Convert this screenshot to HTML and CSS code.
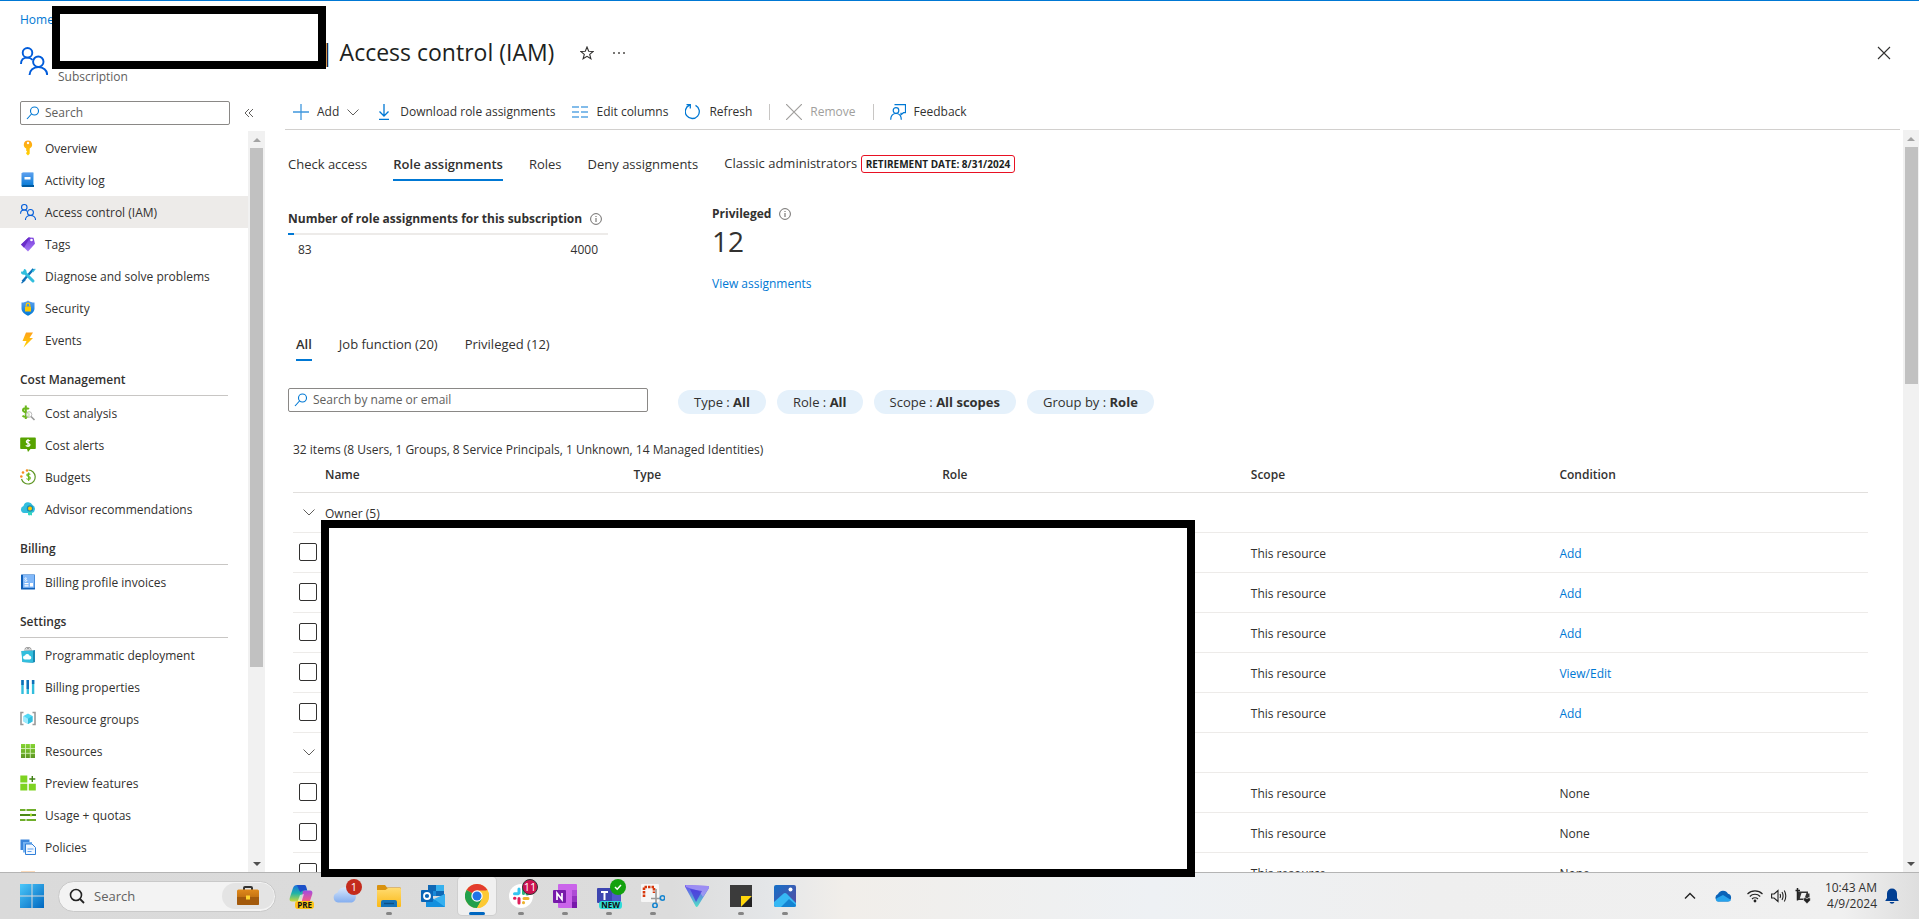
FILE: index.html
```
<!DOCTYPE html>
<html lang="en">
<head>
  <meta charset="UTF-8">
  <meta name="viewport" content="width=device-width, initial-scale=1.0">
  <title>Access control (IAM)</title>
  <link rel="stylesheet" href="styles.css">
</head>
<body>
  <!-- Shared icons -->
  <svg class="sprite" aria-hidden="true">
    <defs>
      <linearGradient id="gBlue" x1="0" y1="0" x2="0" y2="1"><stop offset="0" stop-color="#5ea0ef"/><stop offset="1" stop-color="#0078d4"/></linearGradient>
      <linearGradient id="gKey" x1="0" y1="0" x2="0" y2="1"><stop offset="0" stop-color="#fea11b"/><stop offset="1" stop-color="#ffd400"/></linearGradient>
      <linearGradient id="gPurple" x1="0" y1="0" x2="0" y2="1"><stop offset="0" stop-color="#773adc"/><stop offset="1" stop-color="#a67af4"/></linearGradient>
      <linearGradient id="gGreen" x1="0" y1="0" x2="0" y2="1"><stop offset="0" stop-color="#86d633"/><stop offset="1" stop-color="#5e9624"/></linearGradient>
      <linearGradient id="gWin" x1="0" y1="0" x2="1" y2="1"><stop offset="0" stop-color="#4cc8fa"/><stop offset="1" stop-color="#0067c0"/></linearGradient>
      <linearGradient id="gCase" x1="0" y1="0" x2="0" y2="1"><stop offset="0" stop-color="#e08a1c"/><stop offset="1" stop-color="#a85a08"/></linearGradient>
      <linearGradient id="gCopA" x1="0" y1="0" x2="0" y2="1"><stop offset="0" stop-color="#1a6fe0"/><stop offset=".5" stop-color="#1fb3a8"/><stop offset="1" stop-color="#c8d83c"/></linearGradient>
      <linearGradient id="gCopB" x1="0" y1="0" x2="0" y2="1"><stop offset="0" stop-color="#a34be0"/><stop offset=".6" stop-color="#ee5c8c"/><stop offset="1" stop-color="#f7963c"/></linearGradient>
      <linearGradient id="gCloud" x1="0" y1="0" x2="0" y2="1"><stop offset="0" stop-color="#d9e8fb"/><stop offset="1" stop-color="#84aeef"/></linearGradient>
      <linearGradient id="gFolder" x1="0" y1="0" x2="0" y2="1"><stop offset="0" stop-color="#ffdb70"/><stop offset="1" stop-color="#fbb917"/></linearGradient>
      <linearGradient id="gVpn" x1="0" y1="0" x2="0" y2="1"><stop offset="0" stop-color="#6a4bf0"/><stop offset="1" stop-color="#4fe0c8"/></linearGradient>
      <linearGradient id="gPhoto" x1="0" y1="0" x2="1" y2="1"><stop offset="0" stop-color="#1370c8"/><stop offset="1" stop-color="#5b4aa0"/></linearGradient>
    </defs>
    <symbol id="people" viewBox="0 0 28 28">
      <g fill="none" stroke="#015cda" stroke-width="1.900">
        <circle cx="7.500" cy="5.800" r="4.800"/>
        <path d="M1 17c0-4 2.500-6.400 6.500-6.400 2.200 0 3.800.8 5 2.200"/>
        <circle cx="18.300" cy="14.700" r="5.200"/>
        <path d="M9.500 28c0-4.500 4-8 8.900-8s8.800 3.500 8.800 8"/>
      </g>
    </symbol>
    <symbol id="magnifier" viewBox="0 0 14 14">
      <g fill="none" stroke="#0078d4" stroke-width="1.100"><circle cx="8.500" cy="5" r="4"/><path d="M5.500 8L1 13"/></g>
    </symbol>
    <symbol id="chevron" viewBox="0 0 12 12">
      <path d="M.5 3.500L6 9l5.500-5.500" fill="none" stroke="#605e5c"/>
    </symbol>
    <symbol id="info" viewBox="0 0 12 12">
      <circle cx="6" cy="6" r="5.400" fill="none" stroke="#605e5c" stroke-width=".9"/>
      <path d="M6 5v4M6 3v1" stroke="#605e5c"/>
    </symbol>
  </svg>

  <div class="portal">
    <header class="blade-header">
      <nav class="breadcrumb"><a href="#">Home</a></nav>
      <div class="title-row">
        <svg class="blade-icon"><use href="#people"/></svg>
        <div class="title-text">
          <h1><span class="divider">|</span> Access control (IAM)</h1>
          <p>Subscription</p>
        </div>
        <button class="icon-button" aria-label="Favorite">
          <svg width="14" height="14" viewBox="0 0 14 14"><path d="M7 1l1.700 4.200 4.500.3-3.500 2.900 1.200 4.400L7 10.400l-3.900 2.400 1.200-4.400L.8 5.500l4.500-.3z" fill="none" stroke="#323130" stroke-width="1.100"/></svg>
        </button>
        <button class="icon-button" aria-label="More">
          <svg width="14" height="14" viewBox="0 0 14 14" fill="#797775"><rect x="1" y="6" width="2" height="2"/><rect x="6" y="6" width="2" height="2"/><rect x="11" y="6" width="2" height="2"/></svg>
        </button>
        <button class="icon-button close" aria-label="Close">
          <svg width="14" height="14" viewBox="0 0 14 14"><path d="M1 1l12 12M13 1L1 13" stroke="#323130" stroke-width="1.100"/></svg>
        </button>
      </div>
    </header>

    <div class="blade-body">
      <aside class="sidebar">
        <div class="sidebar-search">
          <label class="search-box">
            <svg><use href="#magnifier"/></svg>
            <input type="text" placeholder="Search" aria-label="Search menu">
          </label>
          <button class="collapse" aria-label="Collapse menu">
            <svg width="10" height="10" viewBox="0 0 10 10"><path d="M5 1L1 5l4 4M9 1L5 5l4 4" fill="none" stroke="#605e5c"/></svg>
          </button>
        </div>
        <div class="scroll-area">
          <nav class="menu">
            <a href="#"><svg viewBox="0 0 16 16"><path d="M8 .5a4.200 4.200 0 0 1 1.700 8v5.200L8 15.500l-1.800-1.800v-1l1-1-1-1V8.500A4.200 4.200 0 0 1 8 .5z" fill="url(#gKey)"/><circle cx="8" cy="3" r="1.200" fill="#fff"/></svg>Overview</a>
            <a href="#"><svg viewBox="0 0 16 16"><path d="M3 .5h11v14H3z" fill="#9cd0f5"/><path d="M1.500 1.500l1-1H13V14l-1 1H2.500l-1-1z" fill="url(#gBlue)"/><rect x="4.500" y="5" width="6" height="2.500" fill="#fff"/><path d="M1.500 14l1.500-1h11v2H2.500z" fill="#005ba1"/></svg>Activity log</a>
            <a href="#" class="active"><svg><use href="#people"/></svg>Access control (IAM)</a>
            <a href="#"><svg viewBox="0 0 16 16"><path d="M1 8.500L8.500 1.500l5 .2 1.500 6L8 15.500z" fill="url(#gPurple)"/><path d="M1 8.500L8.500 1.500l1.500.1L4 11.800z" fill="#6a2ec8"/><circle cx="11.500" cy="4" r="1.300" fill="#fff"/></svg>Tags</a>
            <a href="#"><svg viewBox="0 0 16 16"><path d="M13.500 1L2.500 13.500" stroke="#0f6fb8" stroke-width="2.400"/><path d="M4 4l9 9" stroke="#32bedd" stroke-width="3" stroke-linecap="round"/><path d="M1 3.500l2.500.5.500-3c2 0 3 2 2.500 3.500S4 7 2.500 6.500 1 4.500 1 3.500z" fill="#32bedd"/><path d="M15 .5l.7.7L13 4.500 11.700 3z" fill="#32bedd"/><path d="M1 15l3.500-4 1.200 1.200L2 15.500z" fill="#0f6fb8"/></svg>Diagnose and solve problems</a>
            <a href="#"><svg viewBox="0 0 16 16"><path d="M8 .5c2 1.500 4 2 6.500 2v6c0 3.500-3.500 6-6.500 7.200C5 14.500 1.500 12 1.500 8.500v-6C4 2.500 6 2 8 .5z" fill="url(#gBlue)"/><rect x="5" y="6.500" width="6" height="5" rx=".6" fill="#ffca00"/><path d="M6.200 6.500V5a1.800 1.800 0 0 1 3.600 0v1.500" fill="none" stroke="#ffca00" stroke-width="1.200"/></svg>Security</a>
            <a href="#"><svg viewBox="0 0 16 16"><path d="M6 .5h7L9.500 6H13L3.500 15.500 6.500 9H2.500z" fill="url(#gKey)"/></svg>Events</a>

            <h2>Cost Management</h2>
            <a href="#"><svg viewBox="0 0 16 16"><path d="M8.800 4.200C8 3 3 2.600 3 5.200s6 2 6 4.600-5 2.400-6.500.8M5.800.5v13.500" fill="none" stroke="#6bb71c" stroke-width="2"/><circle cx="9" cy="9.500" r="2.800" fill="#fff" fill-opacity=".7" stroke="#bbb"/><path d="M11 11.500l3.500 3.500" stroke="#999" stroke-width="1.600"/></svg>Cost analysis</a>
            <a href="#"><svg viewBox="0 0 16 16"><path d="M1 .5h14q.8 0 .8.800v10q0 .8-.8.8H10.500L8 15l-1-2.900H1q-.8 0-.8-.8v-10Q.2.500 1 .5z" fill="#57a300"/><path d="M10 4C9.500 3.200 6.300 3 6.300 4.700S10 6 10 7.800s-3.500 1.500-4.200.5M8 2v8" fill="none" stroke="#fff" stroke-width="1.200"/></svg>Cost alerts</a>
            <a href="#"><svg viewBox="0 0 16 16"><path d="M8.500 1a7 7 0 1 1-7 9" fill="none" stroke="#5e9624" stroke-width="1.200"/><path d="M10.300 5.500C9.500 4.500 6.800 4.500 6.800 6s3.500 1.200 3.500 3-3 1.500-3.800.5M8.600 3.500v8.500" fill="none" stroke="#6bb71c" stroke-width="1.200"/><circle cx="7" cy="1.500" r="1.300" fill="#f78d1e"/><circle cx="3" cy="3.500" r="1.300" fill="#f78d1e"/><circle cx="1.300" cy="7.500" r="1.300" fill="#f78d1e"/></svg>Budgets</a>
            <a href="#"><svg viewBox="0 0 16 16"><path d="M4 12a3.600 3.600 0 0 1-.5-7A4.800 4.800 0 0 1 12.500 4 4.300 4.300 0 0 1 12 12z" fill="#32bedd"/><path d="M8 10h4v4.800l-1.200-1-1 1-.8-1-1 .7z" fill="#32d4c0"/><circle cx="10" cy="7.500" r="3.200" fill="#198ab3"/><circle cx="10" cy="7.500" r="2" fill="#ffca00"/></svg>Advisor recommendations</a>

            <h2>Billing</h2>
            <a href="#"><svg viewBox="0 0 16 16"><rect x="1" y=".5" width="14" height="15" rx=".6" fill="#0f5fb8"/><rect x="3" y=".8" width="11.500" height="13" fill="#83b9f9"/><path d="M4.500 9h4v1.200h-4zM4.500 11.200h4v1.200h-4zM10 9h3v3.500h-3z" fill="#fff"/><path d="M6.800 4.500c-1-1-2-.5-2 .3s2 .8 2 1.700-1.300 1-2.200.2" fill="none" stroke="#fff"/></svg>Billing profile invoices</a>

            <h2>Settings</h2>
            <a href="#"><svg viewBox="0 0 16 16"><path d="M5 4V2.500a2 2 0 0 1 4 0V4M7 4V2.500a2 2 0 0 1 4 0V4" fill="none" stroke="#999"/><path d="M1.500 4l11-.5L15 3v12l-2 .8L2.500 15z" fill="#198ab3"/><path d="M1.500 4H13v11.500L2.300 15z" fill="#32bedd"/><path d="M5 12.500a2 2 0 0 1 0-4 2.500 2.500 0 0 1 4.600.3 1.900 1.900 0 0 1 .4 3.700z" fill="#fff"/></svg>Programmatic deployment</a>
            <a href="#"><svg viewBox="0 0 16 16"><path d="M2.500 1v14M7.800 1v14M13.100 1v14" stroke="#32bedd" stroke-width="2.400"/><path d="M2.500 1v5M7.800 1v9M13.100 1v4" stroke="#0f6fb8" stroke-width="2.400"/></svg>Billing properties</a>
            <a href="#"><svg viewBox="0 0 16 16"><path d="M3.500 1.500H1v12h2.500M12.500 1.500H15v12h-2.500" fill="none" stroke="#999" stroke-width="1.600"/><path d="M8 2.500l4.500 2.500v5.500L8 13 3.500 10.500V5z" fill="#50d8f5"/><path d="M8 7.700V13l-4.500-2.500V5z" fill="#9cebff"/><path d="M12.500 5v5.500L8 13V7.700z" fill="#32bedd"/></svg>Resource groups</a>
            <a href="#"><svg viewBox="0 0 16 16"><rect x="1" y="1" width="14" height="14" fill="url(#gGreen)"/><path d="M1 5.500h14M1 10.300h14M5.500 1v14M10.300 1v14" stroke="#d5efb8" stroke-width=".9"/></svg>Resources</a>
            <a href="#"><svg viewBox="0 0 16 16"><path d="M.3.5h7v7h-7zM.3 8.800h7v6.700h-7zM8.800 8.800h7v6.700h-7z" fill="#7ed321"/><path d="M12.300 1v6M9.300 4h6" stroke="#3f8012" stroke-width="1.400"/></svg>Preview features</a>
            <a href="#"><svg viewBox="0 0 16 16"><path d="M0 3h5.500M6.500 3H16M0 13h5.500M6.500 13H16" stroke="#6fae2b" stroke-width="2"/><path d="M0 8h16" stroke="#4c8a16" stroke-width="2"/><path d="M11 6.500v3" stroke="#b4ec36" stroke-width="1.600"/></svg>Usage + quotas</a>
            <a href="#"><svg viewBox="0 0 16 16"><path d="M.5.500h9V11h-9z" fill="#3a85db"/><path d="M3 3h9v10.500H3z" fill="#76b3f2"/><path d="M5.500 5h6.500l3.500 3.500v7h-10z" fill="#f2f8ff" stroke="#2f7ed8"/><path d="M7.500 10h6M7.500 12.500h4" stroke="#5ea0ef"/></svg>Policies</a>
            <a href="#" aria-label="Resource locks"><svg viewBox="0 0 16 16"><rect x="1" y="0" width="14" height="15" fill="#fbd9b8"/></svg></a>
          </nav>
          <div class="scrollbar menu-scroll" aria-hidden="true">
            <span class="arrow up"></span>
            <span class="thumb"></span>
            <span class="arrow down"></span>
          </div>
        </div>
      </aside>

      <main>
        <div class="toolbar">
          <button><svg viewBox="0 0 16 16"><path d="M8 0v16M0 8h16" stroke="#3f97dd" stroke-width="1.300"/></svg>Add<svg class="small"><use href="#chevron"/></svg></button>
          <button><svg viewBox="0 0 16 16"><path d="M8 0v12M3.500 7.500L8 12l4.500-4.500M3 15.300h10" fill="none" stroke="#0078d4" stroke-width="1.300"/></svg>Download role assignments</button>
          <button><svg viewBox="0 0 16 16"><path d="M0 3h7M9 3h7M0 8h7M9 8h7M0 13h7M9 13h7" stroke="#5aa7e4" stroke-width="1.600"/></svg>Edit columns</button>
          <button><svg viewBox="0 0 16 16"><path d="M10.500 1.300a7 7 0 1 1-6-.2M1.500.7h3.800v3.800" fill="none" stroke="#0078d4" stroke-width="1.300"/></svg>Refresh</button>
          <button class="split" disabled><svg viewBox="0 0 16 16"><path d="M0 0l16 16M16 0L0 16" stroke="#a19f9d" stroke-width="1.200"/></svg>Remove</button>
          <button class="split"><svg viewBox="0 0 16 16"><g fill="none" stroke="#0078d4" stroke-width="1.200"><path d="M4.500.7h11v8h-2l-2.500 2v-2"/><circle cx="6" cy="6.500" r="2.800"/><path d="M.7 15.800c0-4 2-6.300 5.300-6.300s5.300 2.300 5.300 6.300"/></g></svg>Feedback</button>
        </div>

        <div class="scroll-area">
          <div class="content">
            <div class="tabs">
              <button>Check access</button>
              <button class="active">Role assignments</button>
              <button>Roles</button>
              <button>Deny assignments</button>
              <button>Classic administrators <span class="badge">RETIREMENT DATE: 8/31/2024</span></button>
            </div>

            <div class="stats">
              <section class="quota">
                <h3>Number of role assignments for this subscription <svg><use href="#info"/></svg></h3>
                <div class="bar"><span style="width: 2%"></span></div>
                <div class="range"><span>83</span><span>4000</span></div>
              </section>
              <section class="privileged">
                <h3>Privileged <svg><use href="#info"/></svg></h3>
                <p>12</p>
                <a href="#">View assignments</a>
              </section>
            </div>

            <div class="tabs sub-tabs">
              <button class="active">All</button>
              <button>Job function (20)</button>
              <button>Privileged (12)</button>
            </div>

            <div class="filters">
              <label class="search-box">
                <svg><use href="#magnifier"/></svg>
                <input type="text" placeholder="Search by name or email" aria-label="Search by name or email">
              </label>
              <div class="pills">
                <button>Type : <b>All</b></button>
                <button>Role : <b>All</b></button>
                <button>Scope : <b>All scopes</b></button>
                <button>Group by : <b>Role</b></button>
              </div>
            </div>

            <p class="summary">32 items (8 Users, 1 Groups, 8 Service Principals, 1 Unknown, 14 Managed Identities)</p>

            <table>
              <colgroup><col class="select-col"><col><col><col><col><col></colgroup>
              <thead>
                <tr><th></th><th>Name</th><th>Type</th><th>Role</th><th>Scope</th><th>Condition</th></tr>
              </thead>
              <tbody>
                <tr class="group"><td><button aria-label="Collapse group"><svg><use href="#chevron"/></svg></button></td><td colspan="5">Owner (5)</td></tr>
                <tr><td><input type="checkbox" aria-label="Select row"></td><td></td><td></td><td></td><td>This resource</td><td><a href="#">Add</a></td></tr>
                <tr><td><input type="checkbox" aria-label="Select row"></td><td></td><td></td><td></td><td>This resource</td><td><a href="#">Add</a></td></tr>
                <tr><td><input type="checkbox" aria-label="Select row"></td><td></td><td></td><td></td><td>This resource</td><td><a href="#">Add</a></td></tr>
                <tr><td><input type="checkbox" aria-label="Select row"></td><td></td><td></td><td></td><td>This resource</td><td><a href="#">View/Edit</a></td></tr>
                <tr><td><input type="checkbox" aria-label="Select row"></td><td></td><td></td><td></td><td>This resource</td><td><a href="#">Add</a></td></tr>
              </tbody>
              <tbody>
                <tr class="group"><td><button aria-label="Collapse group"><svg><use href="#chevron"/></svg></button></td><td colspan="5"></td></tr>
                <tr><td><input type="checkbox" aria-label="Select row"></td><td></td><td></td><td></td><td>This resource</td><td>None</td></tr>
                <tr><td><input type="checkbox" aria-label="Select row"></td><td></td><td></td><td></td><td>This resource</td><td>None</td></tr>
                <tr><td><input type="checkbox" aria-label="Select row"></td><td></td><td></td><td></td><td>This resource</td><td>None</td></tr>
              </tbody>
            </table>
          </div>
          <div class="scrollbar page-scroll" aria-hidden="true">
            <span class="arrow up"></span>
            <span class="thumb"></span>
            <span class="arrow down"></span>
          </div>
        </div>
      </main>
    </div>
  </div>

  <footer class="taskbar">
    <button class="start" aria-label="Start">
      <svg width="24" height="24" viewBox="0 0 24 24"><path d="M0 0h11.500v11.500H0zM12.500 0H24v11.500H12.500zM0 12.500h11.500V24H0zM12.500 12.500H24V24H12.500z" fill="url(#gWin)"/></svg>
    </button>
    <label class="task-search">
      <svg width="16" height="16" viewBox="0 0 16 16"><circle cx="7" cy="7" r="5.500" fill="none" stroke="#222" stroke-width="1.600"/><path d="M11 11l4 4" stroke="#222" stroke-width="1.800"/></svg>
      <input type="text" placeholder="Search" aria-label="Search Windows">
      <span class="briefcase"><svg width="24" height="20" viewBox="0 0 24 20"><path d="M8 4V2q0-1 1-1h6q1 0 1 1v2" fill="none" stroke="#333" stroke-width="2"/><rect x="1" y="3.500" width="22" height="15.500" rx="1.500" fill="url(#gCase)"/><path d="M1 11h22v6.500q0 1.500-1.500 1.500h-19Q1 19 1 17.500z" fill="#a35a0c"/><rect x="10" y="9.500" width="4" height="4" fill="#ffd52e"/></svg></span>
    </label>
    <div class="apps">
      <button aria-label="Copilot">
        <svg viewBox="0 0 24 24"><path d="M8 1h7q2 0 1.300 2.200L12.500 15.500Q12 17.500 10 17.500H3Q0 17.500.7 14L4 4q1-3 4-3z" fill="url(#gCopA)"/><path d="M14 6.500h7q3 0 2.300 3.500L20 20q-1 3-4 3H9q2 0 2.700-2.200z" fill="url(#gCopB)"/><path d="M8 1h7q2 0 2.300 2l1 3.500h-4q-2 0-2.500 2L10 6z" fill="#1c50c8"/><path d="M11 11l-2.500 7h4l2.500-8z" fill="#fff" opacity=".6"/></svg>
        <span class="tag pre">PRE</span>
      </button>
      <button aria-label="Weather">
        <svg viewBox="0 0 24 24"><path d="M5 18.500a5 5 0 0 1-.6-9.800A7.500 7.500 0 0 1 18 7a6 6 0 0 1 1 11.500z" fill="url(#gCloud)"/></svg>
        <span class="count">1</span>
      </button>
      <button class="open" aria-label="File Explorer">
        <svg viewBox="0 0 24 24"><path d="M0 2q0-1 1-1h7l2 2.500h13q1 0 1 1V8H0z" fill="#d9920f"/><path d="M0 6h8.500L11 4h12q1 0 1 1v17q0 1-1 1H1q-1 0-1-1z" fill="url(#gFolder)"/><path d="M4 23v-5q0-2 2-2h12q2 0 2 2v5z" fill="#1673b8"/><path d="M7 19.500h10" stroke="#0c4f86" stroke-width="1.400"/></svg>
      </button>
      <button aria-label="Outlook">
        <svg viewBox="0 0 24 24"><path d="M7 1h16v11H7z" fill="#0f68b5"/><path d="M15 1h8v6h-8z" fill="#35b1ee"/><path d="M7 7h8v5H7z" fill="#1989d8"/><path d="M5 10l9.500 6L24 10v13H5z" fill="#1490df"/><path d="M24 10v13L13 15z" fill="#36b0f0"/><rect y="6" width="12" height="12" rx="1" fill="#0a66b7"/><circle cx="6" cy="12" r="3" fill="none" stroke="#fff" stroke-width="1.800"/></svg>
      </button>
      <button class="open current" aria-label="Chrome">
        <svg viewBox="0 0 24 24"><circle cx="12" cy="12" r="12" fill="#fcc934"/><path d="M12 12L1.600 6A12 12 0 0 1 22.400 6z" fill="#e33b2e"/><path d="M12 12L1.600 6A12 12 0 0 0 12 24l5.200-9z" fill="#22a04c"/><path d="M12 6.500h10.700A12 12 0 0 1 12 24l5-9z" fill="#fcc934"/><circle cx="12" cy="12" r="5.700" fill="#fff"/><circle cx="12" cy="12" r="4.500" fill="#2173e8"/></svg>
      </button>
      <button class="open" aria-label="Slack">
        <svg viewBox="0 0 24 24"><circle cx="12" cy="12" r="12" fill="#fff"/><g stroke-width="3" stroke-linecap="round"><path d="M10 5v4M5.500 9.800H9" stroke="#36c5f0"/><path d="M14.500 5v4.500M18.500 10h-.5" stroke="#2eb67d"/><path d="M15 14.500h4M14.500 18.500v.3" stroke="#ecb22e"/><path d="M10 14.500v4.500M5.500 14.300h.5" stroke="#e01e5a"/></g></svg>
        <span class="count slack">11</span>
      </button>
      <button class="open" aria-label="OneNote">
        <svg viewBox="0 0 24 24"><rect x="5" width="19" height="24" rx="1" fill="#ca64ea"/><path d="M19 6h5v6h-5z" fill="#ae4bd5"/><path d="M19 12h5v6h-5z" fill="#9332bf"/><path d="M19 18h5v6h-5z" fill="#7719aa"/><rect y="6" width="13" height="13" rx="1" fill="#7719aa"/><path d="M4 16V9.200l5 6.400V9" fill="none" stroke="#fff" stroke-width="1.700"/></svg>
      </button>
      <button class="open" aria-label="Teams">
        <svg viewBox="0 0 24 24"><circle cx="17" cy="4" r="3.500" fill="#5b63c8"/><path d="M11 8h13v9q-1 5-6 5h-7z" fill="#5059c9"/><rect y="4" width="15" height="15" rx="1" fill="#3d45b0"/><path d="M4 8h7M7.500 8v8" stroke="#fff" stroke-width="2"/></svg>
        <span class="count ok"><svg viewBox="0 0 10 10"><path d="M2 5l2.200 2.200L8 3" fill="none" stroke="#fff" stroke-width="1.500"/></svg></span>
        <span class="tag new">NEW</span>
      </button>
      <button class="open" aria-label="Snipping Tool">
        <svg viewBox="0 0 24 24"><rect width="18" height="18" rx="1" fill="#f6f6f6"/><path d="M3 13V3h10v6" fill="none" stroke="#d8380c" stroke-width="2.600" stroke-dasharray="2.500 1"/><path d="M15 5v14M10 14.500h9" stroke="#999" stroke-width="1.600"/><circle cx="21.500" cy="14" r="2.200" fill="none" stroke="#1786d0" stroke-width="1.600"/><circle cx="14" cy="21.500" r="2.200" fill="none" stroke="#1786d0" stroke-width="1.600"/></svg>
      </button>
      <button aria-label="VPN">
        <svg viewBox="0 0 24 24"><path d="M1 1l22 1q2 0 1 2L13 22q-1.500 2-2.500 0L.2 3Q-.5 1 1 1z" fill="url(#gVpn)"/><path d="M1 1l22 1q2 0 1 2l-6 9-4-6-13-4z" fill="#a99af5" opacity=".8"/><path d="M5 5l12 2-6 11z" fill="#4432d8" opacity=".7"/></svg>
      </button>
      <button class="open" aria-label="Sticky Notes">
        <svg viewBox="0 0 24 24"><path d="M1 1h22v11l-11 11H1z" fill="#3b3b3b"/><path d="M12 23V12h11z" fill="#ffd60a"/><path d="M12 23l11-11v11z" fill="#222"/></svg>
      </button>
      <button class="open" aria-label="Photos">
        <svg viewBox="0 0 24 24"><rect x="1" y="1" width="22" height="22" rx="2" fill="url(#gPhoto)"/><path d="M1 18l9-8q2-2 4 0l9 9v2q0 2-2 2H3q-2 0-2-2z" fill="#36b8f4"/><path d="M8 23l8-8 7 6q-.3 2-2 2z" fill="#1583d2"/><circle cx="17.500" cy="5.500" r="2" fill="#fff"/></svg>
      </button>
    </div>

    <div class="tray">
      <svg width="12" height="12" viewBox="0 0 12 12"><path d="M1 8.500l5-5 5 5" fill="none" stroke="#222" stroke-width="1.400"/></svg>
      <svg class="onedrive" width="18" height="12" viewBox="0 0 18 12"><path d="M4 11.500A4 4 0 0 1 4 4a5.500 5.500 0 0 1 10-.3 4 4 0 0 1 0 7.800z" fill="#0a63b8"/><path d="M3 11.500q-2-2 0-3.500l6-3 8 5q-.7 1.500-3 1.500z" fill="#27a3ec"/></svg>
      <svg width="16" height="14" viewBox="0 0 16 14"><g fill="none" stroke="#222" stroke-width="1.100"><path d="M.5 5a10.500 10.500 0 0 1 15 0M2.800 7.500a7.300 7.300 0 0 1 10.400 0M5 10a4.200 4.200 0 0 1 6 0"/></g><circle cx="8" cy="12" r="1.400" fill="#222"/></svg>
      <svg width="16" height="14" viewBox="0 0 16 14"><path d="M.6 5v4h2.500L7 12.500v-11L3.100 5zM9 5q1 2 0 4M11 3q2.200 4 0 8M13.300 1.500q3 5.500 0 11" fill="none" stroke="#222" stroke-width="1.100"/></svg>
      <svg width="16" height="16" viewBox="0 0 16 16"><path d="M3 3.500h10v2h1.500v4H13V12H3z" fill="#333"/><path d="M6.500 5h5L9.500 10.500H4.800z" fill="#f0f0f0"/><path d="M2.500 0v4M.5 2.500h4.500M2.500 4v8.500" fill="none" stroke="#222" stroke-width="1.500"/><path d="M12 15.800L8.600 12.300q-.6-2.200 1.200-2.600Q11.500 9.500 12 11q.5-1.500 2.200-1.300 1.800.4 1.200 2.600z" fill="#222" stroke="#f0f0f0" stroke-width=".6"/></svg>
      <time datetime="2024-04-09T10:43">10:43 AM<br>4/9/2024</time>
      <svg width="14" height="16" viewBox="0 0 14 16"><path d="M7 .5a5 5 0 0 1 5 5V10l1.800 3H.2L2 10V5.500a5 5 0 0 1 5-5zM4.500 14h5q-.5 1.800-2.500 1.800T4.500 14z" fill="#003e92"/></svg>
    </div>
  </footer>

  <!-- Hidden customer data -->
  <div class="redaction subscription-name"></div>
  <div class="redaction assignees"></div>
</body>
</html>
```
FILE: styles.css
```
* {
  box-sizing: border-box;
}

body {
  margin: 0;
  height: 100vh;
  display: flex;
  flex-direction: column;
  overflow: hidden;
  position: relative;
  font-family: "Segoe UI", "Open Sans", "Noto Sans", sans-serif;
  font-size: 12px;
  line-height: 16px;
  color: #323130;
  background: #fff;
}

h1, h2, h3, p {
  margin: 0;
}

a {
  color: #0078d4;
  text-decoration: none;
}

button, input {
  font: inherit;
  color: inherit;
}

button {
  border: none;
  background: none;
  padding: 0;
  cursor: pointer;
}

svg {
  flex: none;
}

.sprite {
  position: absolute;
  width: 0;
  height: 0;
}

/* Blade header */
.portal {
  flex: 1;
  min-height: 0;
  display: flex;
  flex-direction: column;
  border-top: 1px solid #0078d4;
}

.blade-header {
  height: 93px;
  padding: 11px 28px 0 20px;
}

.title-row {
  display: flex;
  align-items: flex-start;
  gap: 12px;
  margin-top: 6px;
}

.blade-icon {
  width: 28px;
  height: 28px;
  margin-top: 13px;
}

.title-text {
  margin-left: -2px;
}

.title-text h1 {
  margin-left: 263px;
  font-size: 23px;
  line-height: 36px;
  font-weight: 400;
  color: #201f1e;
}

.title-text p {
  margin-top: -1px;
  font-size: 12px;
  color: #605e5c;
}

.icon-button {
  height: 38px;
  width: 20px;
  display: flex;
  align-items: center;
  justify-content: center;
}

.title-text + .icon-button {
  margin-left: 11px;
}

.close {
  margin-left: auto;
  margin-right: -3px;
}

.blade-body {
  flex: 1;
  min-height: 0;
  display: flex;
}

/* Left menu */
.sidebar {
  width: 265px;
  display: flex;
  flex-direction: column;
}

.sidebar-search {
  height: 37px;
  display: flex;
  align-items: center;
  gap: 14px;
  padding-left: 20px;
}

.sidebar-search .search-box {
  width: 210px;
}

.search-box {
  display: flex;
  align-items: center;
  gap: 5px;
  height: 24px;
  padding: 0 5px;
  border: 1px solid #8a8886;
  border-radius: 2px;
}

.search-box svg {
  width: 14px;
  height: 14px;
}

.search-box input {
  flex: 1;
  min-width: 0;
  padding: 0;
  border: none;
  outline: none;
  background: none;
}

.search-box input::placeholder {
  color: #605e5c;
  opacity: 1;
}

.collapse {
  display: flex;
}

.scroll-area {
  flex: 1;
  min-height: 0;
  display: flex;
  overflow: hidden;
}

.menu {
  flex: 1;
  padding-top: 1px;
}

.menu a {
  display: flex;
  align-items: center;
  gap: 9px;
  height: 32px;
  padding: 2px 0 0 20px;
  color: #323130;
}

.menu a svg {
  width: 16px;
  height: 16px;
  margin-bottom: 2px;
}

.menu a.active {
  background: #edebe9;
}

.menu h2 {
  height: 40px;
  margin: 0 20px 1px;
  padding-top: 16px;
  border-bottom: 1px solid #c8c6c4;
  font-size: 12px;
  font-weight: 600;
}

/* Scrollbars */
.scrollbar {
  width: 17px;
  display: flex;
  flex-direction: column;
  align-items: center;
  background: #f1f1f1;
}

.scrollbar .thumb {
  width: 13px;
  background: #c1c1c1;
}

.menu-scroll .thumb {
  height: 70%;
}

.page-scroll {
  width: 16px;
}

.page-scroll .thumb {
  height: 32%;
}

.arrow {
  width: 17px;
  height: 17px;
  display: flex;
  align-items: center;
  justify-content: center;
}

.arrow::before {
  content: "";
  border: 4px solid transparent;
}

.up::before {
  border-top: none;
  border-bottom-color: #a3a3a3;
}

.down {
  margin-top: auto;
}

.down::before {
  border-bottom: none;
  border-top-color: #505050;
}

/* Main area */
main {
  flex: 1;
  min-width: 0;
  display: flex;
  flex-direction: column;
}

.toolbar {
  height: 36px;
  margin: 0 19px 0 20px;
  padding: 1px 0 0 8px;
  display: flex;
  align-items: center;
  gap: 17px;
  border-bottom: 1px solid #d2d0ce;
}

.toolbar button {
  display: flex;
  align-items: center;
  gap: 8px;
}

.toolbar svg {
  width: 16px;
  height: 16px;
}

.toolbar .small {
  width: 12px;
  height: 12px;
}

.toolbar .split {
  border-left: 1px solid #c8c6c4;
  padding-left: 16px;
}

.toolbar button:disabled {
  color: #a19f9d;
}

.content {
  flex: 1;
  min-width: 0;
  padding: 18px 35px 0 23px;
}

.tabs {
  display: flex;
  gap: 26px;
  font-size: 13px;
}

.tabs button {
  height: 33px;
  border-bottom: 2px solid transparent;
}

.tabs .active {
  border-color: #0078d4;
  font-weight: 600;
}

.badge {
  display: inline-block;
  padding: 0 4px;
  border: 1px solid #e81123;
  border-radius: 3px;
  font-size: 10px;
  font-weight: 700;
  color: #201f1e;
}

.stats {
  display: flex;
  gap: 104px;
  margin-top: 25px;
  height: 122px;
}

.stats h3 {
  display: flex;
  align-items: center;
  gap: 8px;
  font-size: 12px;
  font-weight: 700;
}

.stats h3 svg {
  width: 12px;
  height: 12px;
}

.quota {
  width: 320px;
  padding-top: 5px;
}

.bar {
  height: 2px;
  margin-top: 6px;
  background: #edebe9;
}

.bar span {
  display: block;
  height: 2px;
  background: #0078d4;
}

.range {
  display: flex;
  justify-content: space-between;
  padding: 7px 10px;
}

.privileged p {
  font-size: 28px;
  line-height: 38px;
}

.privileged a {
  display: block;
  margin-top: 16px;
}

.sub-tabs {
  padding-left: 8px;
  gap: 27px;
}

.filters {
  display: flex;
  align-items: flex-start;
  gap: 30px;
  margin-top: 27px;
}

.filters .search-box {
  width: 360px;
}

.pills {
  display: flex;
  gap: 11px;
  padding-top: 2px;
}

.pills button {
  height: 24px;
  padding: 0 16px;
  border-radius: 12px;
  font-size: 13px;
  background: #e5f1fb;
}

.pills b {
  font-weight: 700;
}

.summary {
  margin: 28px 0 0 5px;
}

/* Assignments */
table {
  width: calc(100% - 5px);
  margin-left: 5px;
  table-layout: fixed;
  border-collapse: collapse;
}

.select-col {
  width: 32px;
}

th {
  height: 34px;
  padding: 0;
  border-bottom: 1px solid #e1dfdd;
  text-align: left;
  font-weight: 600;
}

td {
  height: 40px;
  padding: 4px 0 0;
  border-bottom: 1px solid #edebe9;
}

td:first-child {
  padding: 0 0 0 6px;
}

.group {
  font-weight: 500;
}

.group button {
  display: flex;
  padding-left: 4px;
}

.group svg {
  width: 12px;
  height: 12px;
}

td input {
  display: block;
  appearance: none;
  width: 18px;
  height: 18px;
  margin: 0;
  border: 1px solid #323130;
  border-radius: 2px;
}

/* Windows taskbar */
.taskbar {
  height: 47px;
  display: flex;
  align-items: center;
  padding: 0 20px;
  border-top: 1px solid #b4b4b4;
  background: linear-gradient(90deg, #dadada 0%, #dcdcdc 35%, #e4e6e8 40%, #f1eeea 44%, #eef1f4 60%, #efefef 75%, #f0f0f0 96%, #dedede 100%);
}

.start {
  display: flex;
  margin-right: 14px;
}

.task-search {
  width: 218px;
  height: 31px;
  display: flex;
  align-items: center;
  gap: 9px;
  padding: 0 1px 0 10px;
  border: 1px solid #c9c9c9;
  border-radius: 16px;
  background: #f3f3f3;
}

.task-search input {
  flex: 1;
  min-width: 0;
  padding: 0;
  border: none;
  background: none;
  font-size: 13px;
}

.task-search input::placeholder {
  color: #616161;
  opacity: 1;
}

.briefcase {
  width: 52px;
  height: 26px;
  display: flex;
  align-items: center;
  justify-content: center;
  border-radius: 13px;
  background: #e4e4e4;
}

.apps {
  display: flex;
  gap: 6px;
  margin-left: 6px;
}

.apps button {
  position: relative;
  width: 38px;
  height: 38px;
  display: flex;
  align-items: center;
  justify-content: center;
}

.apps button > svg {
  width: 24px;
  height: 24px;
}

.apps .open::after {
  content: "";
  position: absolute;
  bottom: 0;
  width: 6px;
  height: 3px;
  border-radius: 2px;
  background: #858585;
}

.apps .current {
  border-radius: 4px;
  background: #f0f0f0;
  box-shadow: 0 0 0 1px #cfcfcf;
}

.apps .current::after {
  width: 16px;
  background: #0067c0;
}

.tag {
  position: absolute;
  right: 6px;
  bottom: 6px;
  padding: 0 2px;
  border-radius: 3px;
  font-size: 8px;
  line-height: 8px;
  font-weight: 700;
  color: #111;
}

.pre {
  background: #fcc419;
}

.new {
  background: #30dcd8;
}

.count {
  position: absolute;
  top: 2px;
  right: 2px;
  width: 16px;
  height: 16px;
  display: flex;
  align-items: center;
  justify-content: center;
  border-radius: 8px;
  font-size: 11px;
  line-height: 16px;
  color: #fff;
  background: #c42b1c;
}

.slack {
  background: #cd1150;
  border: 1px solid #333;
}

.ok {
  background: #13a10e;
}

.ok svg {
  width: 10px;
  height: 10px;
}

.tray {
  display: flex;
  align-items: center;
  gap: 8px;
  margin-left: auto;
}

.tray .onedrive {
  margin: 0 7px 0 10px;
}

.tray time {
  margin-left: 6px;
  text-align: right;
}

/* Boxes over private data */
.redaction {
  position: absolute;
  border: 8px solid #000;
  background: #fff;
}

.subscription-name {
  left: 52px;
  top: 6px;
  width: 274px;
  height: 63px;
}

.assignees {
  left: 321px;
  top: 520px;
  width: 874px;
  height: 357px;
}
```
